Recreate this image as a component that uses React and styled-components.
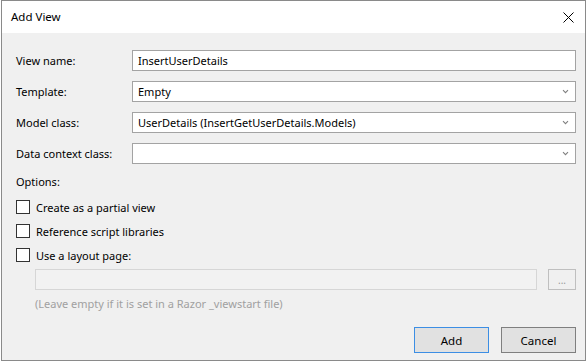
import React from 'react';
import styled, { createGlobalStyle } from 'styled-components';

const GlobalStyle = createGlobalStyle`
  html, body {
    margin: 0;
    padding: 0;
    background: #ffffff;
  }
  body {
    font-family: "Noto Sans", "Open Sans", sans-serif;
    font-size: 11px;
    color: #000;
  }
`;

const Window = styled.div`
  box-sizing: border-box;
  width: 585px;
  height: 361px;
  margin-left: 1px;
  border: 1px solid #8a8a8a;
  display: flex;
  flex-direction: column;
  background: #f0f0f0;
`;

const TitleBar = styled.div`
  height: 32px;
  flex: none;
  background: #fff;
  display: flex;
  align-items: center;
  justify-content: space-between;
  padding: 0 7px 0 9px;
`;

const Title = styled.span`
  font-size: 11.5px;
  line-height: 16px;
`;

const CloseButton = styled.button`
  width: 20px;
  height: 20px;
  border: none;
  background: transparent;
  padding: 0;
  display: flex;
  align-items: center;
  justify-content: center;
`;

const Body = styled.div`
  flex: 1;
  display: flex;
  flex-direction: column;
  padding: 17px 9px 7px 13px;
`;

const FormGrid = styled.div`
  display: grid;
  grid-template-columns: 117px 1fr;
  grid-auto-rows: 21px;
  row-gap: 10px;
  align-items: center;
`;

const Label = styled.label`
  line-height: 21px;
  padding-left: 1px;
`;

const Field = styled.div`
  box-sizing: border-box;
  height: 21px;
  border: 1px solid ${p => (p.$disabled ? '#d6d6d6' : '#a3a3a3')};
  background: ${p => (p.$disabled ? '#f2f2f2' : '#fff')};
  display: flex;
  align-items: center;
  justify-content: space-between;
  padding: 0 6px 0 5px;
  line-height: 19px;
  white-space: nowrap;
  flex: ${p => (p.$grow ? 1 : 'none')};
`;

const Chevron = () => (
  <svg width="7" height="5" viewBox="0 0 7 5">
    <path d="M1 1.2 L3.5 3.7 L6 1.2" fill="none" stroke="#808080" strokeWidth="1.1" />
  </svg>
);

const SectionLabel = styled.div`
  margin-top: 8px;
  line-height: 20px;
  padding-left: 1px;
`;

const CheckList = styled.div`
  margin-top: 3px;
  display: flex;
  flex-direction: column;
`;

const CheckRow = styled.label`
  height: 24px;
  display: flex;
  align-items: center;
  gap: 6px;
  padding-left: 1px;
`;

const Box = styled.span`
  box-sizing: border-box;
  width: 14px;
  height: 14px;
  border: 1px solid #333;
  background: #fff;
  flex: none;
`;

const LayoutRow = styled.div`
  margin-top: 2px;
  margin-left: 20px;
  display: flex;
  gap: 11px;
`;

const BrowseButton = styled.button`
  box-sizing: border-box;
  width: 28px;
  height: 21px;
  border: 1px solid #bfbfbf;
  background: #f0f0f0;
  color: #9a9a9a;
  font: inherit;
  font-size: 10px;
  line-height: 14px;
  padding: 0;
`;

const Hint = styled.div`
  margin-top: 4px;
  margin-left: 20px;
  line-height: 20px;
  color: #a0a0a0;
`;

const Footer = styled.div`
  margin-top: auto;
  display: flex;
  justify-content: flex-end;
  gap: 12px;
`;

const Button = styled.button`
  box-sizing: border-box;
  width: 75px;
  height: 26px;
  background: #e1e1e1;
  border: 1px solid ${p => (p.$primary ? '#3c8ee4' : '#7f7f7f')};
  font: inherit;
  font-size: 11.5px;
  color: #000;
  padding: 0;
`;

const rows = [
  { label: 'View name:', value: 'InsertUserDetails', combo: false },
  { label: 'Template:', value: 'Empty', combo: true },
  { label: 'Model class:', value: 'UserDetails (InsertGetUserDetails.Models)', combo: true },
  { label: 'Data context class:', value: '', combo: true },
];

const options = ['Create as a partial view', 'Reference script libraries', 'Use a layout page:'];

export default function App() {
  return (
    <>
      <GlobalStyle />
      <Window>
        <TitleBar>
          <Title>Add View</Title>
          <CloseButton aria-label="Close">
            <svg width="11" height="11" viewBox="0 0 11 11">
              <path d="M0.5 0.5 L10.5 10.5 M10.5 0.5 L0.5 10.5" stroke="#000" strokeWidth="1" />
            </svg>
          </CloseButton>
        </TitleBar>
        <Body>
          <FormGrid>
            {rows.map(r => (
              <React.Fragment key={r.label}>
                <Label>{r.label}</Label>
                <Field>
                  <span>{r.value}</span>
                  {r.combo && <Chevron />}
                </Field>
              </React.Fragment>
            ))}
          </FormGrid>
          <SectionLabel>Options:</SectionLabel>
          <CheckList>
            {options.map(o => (
              <CheckRow key={o}>
                <Box />
                <span>{o}</span>
              </CheckRow>
            ))}
          </CheckList>
          <LayoutRow>
            <Field $disabled $grow />
            <BrowseButton disabled>...</BrowseButton>
          </LayoutRow>
          <Hint>(Leave empty if it is set in a Razor _viewstart file)</Hint>
          <Footer>
            <Button $primary>Add</Button>
            <Button>Cancel</Button>
          </Footer>
        </Body>
      </Window>
    </>
  );
}
